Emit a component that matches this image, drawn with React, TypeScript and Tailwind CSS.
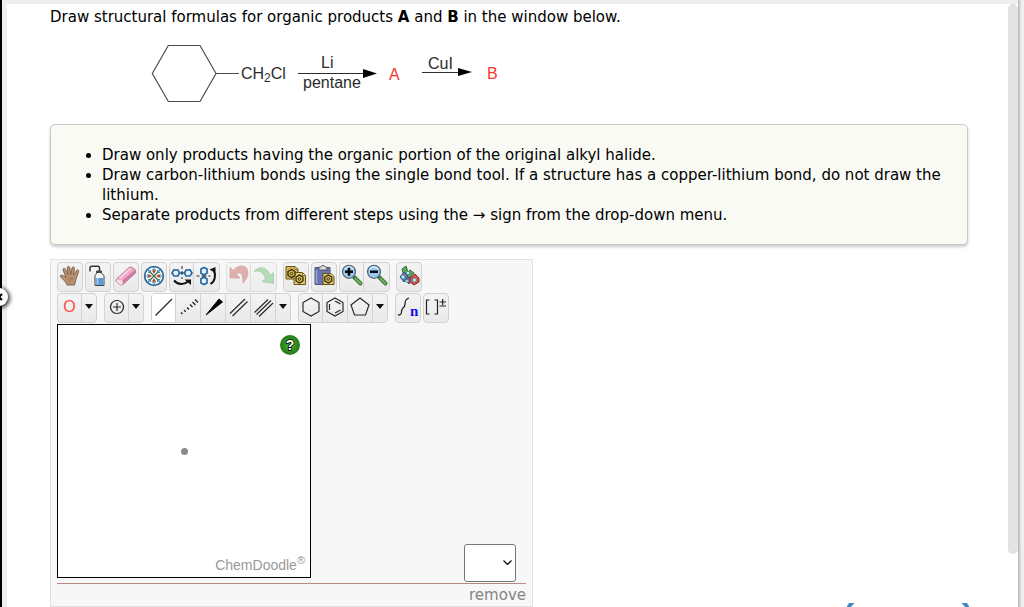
import React from "react";

type IconProps = { children: React.ReactNode };

function Icon({ children }: IconProps) {
  return (
    <svg viewBox="0 0 24 24" className="h-6 w-6 shrink-0" fill="none" aria-hidden="true">
      {children}
    </svg>
  );
}

const HandIcon = () => (
  <Icon>
    <path
      d="M9 21 C8.200 18.500 6 16 2.800 13.300 C1.600 12 3 10.500 4.500 11.300 L7.800 13.200 L5 6 C4.600 4.300 6.700 3.600 7.400 5.200 L10 10.800 L9.200 3.800 C9.200 2 11.500 2 11.800 3.700 L12.800 10.300 L14 4 C14.400 2.300 16.700 2.700 16.400 4.600 L15.700 11 L18.500 6.500 C19.400 5 21.300 6.100 20.600 7.800 L18.300 14.500 C17.600 17 17 19 16.500 21 Z"
      fill="#b8906f"
      stroke="#6d5543"
      strokeWidth="0.8"
    />
    <path d="M9 15c2.500-1.500 5-1 7 .5M11 18.500c.3-2 1.500-3 3.500-3.500" stroke="#8d6a50" strokeWidth="0.700" />
  </Icon>
);

const BottleIcon = () => (
  <Icon>
    <path d="M4 7.500V4c0-1.200.7-1.800 1.800-1.800H12c1 0 1.500.6 1.500 1.500V7" stroke="#333" strokeWidth="1.500" />
    <path d="M10.500 7h5v2.500l2.500 2V21.500H9V11.500l1.500-2z" fill="#f4f7fa" stroke="#444" />
    <path d="M9.700 14h7.700v6.900H9.700z" fill="#5b9cd6" />
    <path d="M11.500 14v6.500" stroke="#a5cff0" strokeWidth="1.500" />
    <path d="M10.500 8h5" stroke="#444" strokeWidth="1.800" />
  </Icon>
);

const EraserIcon = () => (
  <Icon>
    <path d="M2.500 15 15 3.500q1.500-1 3 0l3 2q1 1 .5 3.500L9 20.500q-1.500 1-3 0L2.500 18q-1.200-1 0-3z" fill="#f0a9c7" stroke="#a8708a" strokeWidth="0.800" />
    <path d="M8.500 20.500V16.500L21.300 5.500v3.700z" fill="#cd7b9f" />
    <path d="M2.600 15.500l5.900 1.200v3.600q-1.500.7-2.500 0L2.800 18z" fill="#f8dce7" />
    <path d="M5.500 14.300 16.500 4.500" stroke="#fad3e2" strokeWidth="1.800" />
  </Icon>
);

const SnowIcon = () => (
  <Icon>
    <circle cx="12" cy="12" r="9.300" fill="#fff" stroke="#2f6f9f" strokeWidth="1.800" />
    {[0, 45, 90, 135, 180, 225, 270, 315].map((a) => (
      <g key={a} transform={`rotate(${a} 12 12)`}>
        <path d="M12 8V3.500" stroke="#3780ad" strokeWidth="1.200" />
        <path d="M10.300 5.300 12 7.300l1.700-2" stroke="#3f8a76" strokeWidth="1" />
      </g>
    ))}
    {[0, 90, 180, 270].map((a) => (
      <path key={a} transform={`rotate(${a} 12 12)`} d="M10 6.500h4L12 10z" fill="#c23636" />
    ))}
    <path d="m9 9 6 6M15 9l-6 6" stroke="#37744c" strokeWidth="1.300" />
  </Icon>
);

const FlipHorizontalIcon = () => (
  <Icon>
    <path d="M2 9 4 5.800 8 6l1.500 3L8 12H4zM22 9l-2-3.200L16 6l-1.500 3 1.500 3h4z" fill="#e8f2fb" stroke="#2669a3" strokeWidth="1.700" />
    <path d="M9.500 9h5" stroke="#2669a3" strokeWidth="1.500" />
    <path d="M12 2v3M12 7v4M12 13v2" stroke="#222" />
    <path d="M4 16.500c4 4.500 10 4.500 14 1" stroke="#111" strokeWidth="2" />
    <path d="M14.500 15.500H21V21z" fill="#111" />
  </Icon>
);

const FlipVerticalIcon = () => (
  <Icon>
    <path d="M9 11 5.800 9 6 5l3-1.500L12 5v4zM9 13l-3.200 2 .2 4 3 1.500 3-1.500v-4z" fill="#e8f2fb" stroke="#2669a3" strokeWidth="1.700" />
    <path d="M1.500 12h3M6.500 12h5M13.500 12h2" stroke="#222" />
    <path d="M15.500 20c5-3 5.500-9.500 3-14" stroke="#111" strokeWidth="2" />
    <path d="M14.500 5.500 20.500 3v6z" fill="#111" />
  </Icon>
);

const UndoIcon = () => (
  <Icon>
    <path d="M3 3.500V14h10l-3.500-3.500C12 7.500 16.500 7.500 16 19 23 12 22.500 2 14.500 2 10.500 2 8 4.300 6.500 6.500z" fill="#d08b85" stroke="#bb6f6a" strokeWidth="0.700" />
  </Icon>
);

const RedoIcon = () => (
  <Icon>
    <path d="M21.500 19.500V8.500L18 11.500C16 3.500 8 1 2 7.500 7.500 5.500 12 8.500 13.500 15L10 17.500z" fill="#93cf96" stroke="#6fb275" strokeWidth="0.700" />
  </Icon>
);

const Ring = ({ x, y }: { x: number; y: number }) => (
  <g transform={`translate(${x} ${y})`}>
    <path d="M0-4 3.500-2V2L0 4-3.500 2v-4z" fill="#d8b952" stroke="#2b240e" strokeWidth="1.200" />
    <circle r="1.300" stroke="#2b240e" strokeWidth="0.800" />
  </g>
);

const CopyIcon = () => (
  <Icon>
    <path d="M2 2.500h9l3 3V15H2z" fill="#d5b64d" stroke="#675520" />
    <path d="M10 8.500h8.500l3 3V20.500H10z" fill="#e1c765" stroke="#675520" />
    <path d="m11 2.500 3 3h-3zM18.500 8.500l3 3h-3z" fill="#f8edb9" stroke="#675520" strokeWidth="0.700" />
    <Ring x={7.5} y={9.5} />
    <Ring x={15.5} y={15} />
  </Icon>
);

const PasteIcon = () => (
  <Icon>
    <path d="M3 3.500h15v17H3z" fill="#6774b1" stroke="#4a5486" />
    <path d="M7 5V3h2l1-1.500h2L13 3h2v3H7z" fill="#ddd" stroke="#444" strokeWidth="0.800" />
    <path d="M4.500 6v13.500" stroke="#9ba7d5" strokeWidth="1.500" />
    <path d="M11 9.500h8l3 3V20.500H11z" fill="#dfc66a" stroke="#675520" />
    <Ring x={16.3} y={15} />
  </Icon>
);

const ZoomGlass = ({ plus }: { plus: boolean }) => (
  <Icon>
    <path d="m14 13 6.500 6.500" stroke="#3f6b3c" strokeWidth="4" strokeLinecap="round" />
    <path d="m15.500 14.500 5 5" stroke="#6cb45a" strokeWidth="2.200" strokeLinecap="round" />
    <circle cx="9" cy="7.800" r="6.500" fill="#9cc9ec" stroke="#536778" strokeWidth="1.300" />
    <path d="M4.500 5.300q4.500-5 9 0" stroke="#d7edfc" strokeWidth="1.500" />
    <path d={plus ? "M5 7.800h8M9 3.800v8" : "M5 7.800h8"} stroke="#080808" strokeWidth="2.500" />
  </Icon>
);

const ElementsIcon = () => (
  <Icon>
    <path d="m5 5 4-3 2 6-4 4zM8 12l5-6 4 3-5 6z" fill="#59a75b" stroke="#356b3b" />
    <path d="m3 13 4-5 4 4-4 6zM9 17l3-4 3 3-3 4z" fill="#6574b9" stroke="#3c497c" />
    <path d="m13 14 5-4 4 4v4l-5 3-4-3z" fill="#d55353" stroke="#8c2929" />
    <g fill="#b9eced" stroke="#437b83" strokeWidth="0.700">
      <circle cx="6" cy="13" r="2" />
      <circle cx="11" cy="9" r="1.800" />
      <circle cx="17.500" cy="16" r="2" />
      <circle cx="10" cy="17" r="1.500" />
    </g>
  </Icon>
);

const Line = ({ d }: { d: string }) => (
  <Icon>
    <path d={d} stroke="#2b2b2b" strokeWidth="1.200" />
  </Icon>
);

const WedgeIcon = () => (
  <Icon>
    <path d="M5 20 18 4l3.500 3z" fill="#050505" stroke="#050505" />
  </Icon>
);

const ChainIcon = () => (
  <Icon>
    <path d="M2 20c6 0 1.500-4 5-7 4.500-2.500-1-8 6-10" stroke="#222" strokeWidth="1.300" />
    <text x="14" y="20.500" fill="#1111ee" fontSize="15" fontWeight="bold" fontFamily="Liberation Serif, serif">n</text>
  </Icon>
);

const ChargeIcon = () => (
  <Icon>
    <path d="M5.500 5h-3v14h3M10.500 5h3v14h-3M15.500 7h6.500M18.700 4v6M15.500 11H22" stroke="#222" strokeWidth="1.200" />
  </Icon>
);

type Cell = {
  label: string;
  icon?: React.ReactNode;
  active?: boolean;
};

type GroupProps = { cells: Cell[]; menu?: boolean; faded?: boolean };

function Group({ cells, menu = false, faded = false }: GroupProps) {
  return (
    <div
      className={`flex h-[30px] divide-x divide-[#d2d2d2] overflow-hidden rounded border border-[#d2d2d2] bg-linear-to-b from-[#f4f4f4] to-[#e9e9e9] ${faded ? "opacity-65" : ""}`}
    >
      {cells.map((cell, i) => (
        <button
          key={cell.label}
          type="button"
          aria-label={cell.label}
          className={`flex items-center justify-center pb-0.5 ${i === 0 ? "w-6" : "w-[25px]"} ${cell.active ? "bg-white" : ""}`}
        >
          {cell.icon}
        </button>
      ))}
      {menu && (
        <button
          type="button"
          aria-label={`More: ${cells[0].label}`}
          className="flex w-[14px] items-center justify-center pb-1"
        >
          <svg viewBox="0 0 8 5" className="h-[5px] w-2" aria-hidden="true">
            <path d="M0 0h8L4 5z" fill="#111" />
          </svg>
        </button>
      )}
    </div>
  );
}

function Toolbar() {
  return (
    <div className="flex flex-col gap-px">
      <div className="flex gap-1.5">
        <div className="flex gap-0.5">
          <Group cells={[{ label: "Move", icon: <HandIcon /> }]} />
          <Group cells={[{ label: "Clear", icon: <BottleIcon /> }]} />
          <Group cells={[{ label: "Erase", icon: <EraserIcon /> }]} />
          <Group cells={[{ label: "Center", icon: <SnowIcon /> }]} />
          <Group
            cells={[
              { label: "Flip horizontally", icon: <FlipHorizontalIcon /> },
              { label: "Flip vertically", icon: <FlipVerticalIcon /> },
            ]}
          />
        </div>
        <Group
          faded
          cells={[
            { label: "Undo", icon: <UndoIcon /> },
            { label: "Redo", icon: <RedoIcon /> },
          ]}
        />
        <div className="flex gap-0.5">
          <Group cells={[{ label: "Copy", icon: <CopyIcon /> }]} />
          <Group cells={[{ label: "Paste", icon: <PasteIcon /> }]} />
          <Group
            cells={[
              { label: "Zoom in", icon: <ZoomGlass plus /> },
              { label: "Zoom out", icon: <ZoomGlass plus={false} /> },
            ]}
          />
        </div>
        <Group cells={[{ label: "Element colors", icon: <ElementsIcon /> }]} />
      </div>
      <div className="flex gap-[7px]">
        <Group
          menu
          cells={[{ label: "Oxygen", icon: <span className="font-['Liberation_Sans',sans-serif] text-base text-[#ff4a42]">O</span> }]}
        />
        <Group menu cells={[{ label: "Charge", icon: <Line d="M12 5.500a6.500 6.500 0 1 0 .01 0M12 8v8M8 12h8" /> }]} />
        <Group
          menu
          cells={[
            { label: "Single bond", active: true, icon: <Line d="M3.500 20.500 20 4" /> },
            {
              label: "Recessed bond",
              icon: (
                <Icon>
                  <path d="m5 17.500 1.500 1.500M8 15 9.700 16.700M11 12.500l2 2M14 9.500l2.500 2.500M16.500 7l3 3M19 4.500l3 3" stroke="#222" strokeWidth="1.300" />
                </Icon>
              ),
            },
            { label: "Protruding bond", icon: <WedgeIcon /> },
            { label: "Double bond", icon: <Line d="M4 18.500 19 4M6.500 21 21.500 6.500" /> },
            { label: "Triple bond", icon: <Line d="M3.500 17.500 17 4.500M5.500 19.500 20 5.500M8 21.500 22 8" /> },
          ]}
        />
        <Group
          menu
          cells={[
            { label: "Cyclohexane", icon: <Line d="m12 3 8 4.500v9L12 21l-8-4.500v-9z" /> },
            { label: "Benzene", icon: <Line d="m12 3 8 4.500v9L12 21l-8-4.500v-9zM6.500 9v6M12 6l5.500 3M17.500 15 12 18" /> },
            { label: "Cyclopentane", icon: <Line d="m12 3 9 7-3.500 10h-11L3 10z" /> },
          ]}
        />
        <div className="flex gap-0.5">
          <Group cells={[{ label: "Chain", icon: <ChainIcon /> }]} />
          <Group cells={[{ label: "Brackets", icon: <ChargeIcon /> }]} />
        </div>
      </div>
    </div>
  );
}

function Reaction() {
  return (
    <svg
      viewBox="150 36 350 72"
      className="mt-[9px] ml-[100px] h-[72px] w-[350px] font-['Liberation_Sans',sans-serif] text-base"
      role="img"
      aria-label="Chloromethylcyclohexane reacts with lithium in pentane to give A, then with copper iodide to give B"
    >
      <path d="M152.300 73.500 168.300 45.500H200L216 73.500 200 101.500H168.300ZM216 73.500H239" fill="none" stroke="#4c4c4c" strokeWidth="1.200" />
      <g fill="#2b2b2b">
        <text x="241" y="79">
          CH<tspan fontSize="12" dy="3">2</tspan><tspan dy="-3">Cl</tspan>
        </text>
        <text x="321" y="68">Li</text>
        <text x="303" y="88">pentane</text>
        <text x="428" y="69">CuI</text>
      </g>
      <path d="M298 73.500H366M422 72.500H460" stroke="#2b2b2b" strokeWidth="1.200" />
      <path d="M363 69 377 73.500 363 78ZM458 68 472 72 458 76Z" fill="#000" />
      <g fill="#f9362e">
        <text x="389" y="80">A</text>
        <text x="487" y="79">B</text>
      </g>
    </svg>
  );
}

function Sketcher() {
  return (
    <section className="mt-[14px] w-[483px] border border-[#e1e1e1] bg-[#f7f7f7] px-1.5 pt-0.5">
      <Toolbar />
      <div className="mt-px flex items-end justify-between border-b border-[#b88b88] pr-2.5">
        <div className="relative mb-[5px] flex size-[254px] items-center justify-center border border-black bg-white">
          <span className="size-[7px] rounded-full bg-[#8b8b8b]" />
          <button type="button" aria-label="Help" className="absolute top-2.5 right-2.5 size-5">
            <svg viewBox="0 0 20 20" className="size-5">
              <defs>
                <radialGradient id="help">
                  <stop offset="0" stopColor="#42b52e" />
                  <stop offset="1" stopColor="#267819" />
                </radialGradient>
              </defs>
              <circle cx="10" cy="10" r="10" fill="url(#help)" />
              <text x="10" y="15" textAnchor="middle" fontSize="14" fontWeight="bold" fontFamily="Liberation Sans, sans-serif" fill="#fff" stroke="#000" strokeWidth="1.500" paintOrder="stroke">?</text>
            </svg>
          </button>
          <span className="absolute right-[5px] bottom-0.5 font-['Liberation_Sans',sans-serif] text-sm leading-5 text-[#999]">
            ChemDoodle<sup className="-top-1.5 text-[11px]">®</sup>
          </span>
        </div>
        <div className="relative mb-px">
          <select aria-label="Separator sign" className="block h-[38px] w-[52px] appearance-none rounded-[3px] border border-[#767676] bg-white">
            <option value=""></option>
            <option value="arrow">→</option>
            <option value="plus">+</option>
          </select>
          <svg viewBox="0 0 9 5" className="pointer-events-none absolute top-4 right-1 h-[5px] w-[9px]" aria-hidden="true">
            <path d="m.5.5 4 4 4-4" fill="none" stroke="#111" strokeWidth="1.300" />
          </svg>
        </div>
      </div>
      <div className="flex h-[22px] items-center justify-end">
        <button type="button" className="text-[15px] leading-5 text-[#858585]">remove</button>
      </div>
    </section>
  );
}

export default function App() {
  return (
    <div className="relative flex h-screen overflow-hidden bg-[#efefef] pt-1 font-['DejaVu_Sans',sans-serif] text-[15px] leading-5 text-black">
      <div className="-mt-1 mr-[5px] w-0.5 bg-black" />
      <main className="min-w-0 flex-1 bg-white pt-[3px] pr-[40px] pl-[43px]">
        <p>
          Draw structural formulas for organic products <b>A</b> and <b>B</b> in the window below.
        </p>
        <Reaction />
        <ul className="mt-4 list-disc rounded-[5px] border border-[#c9c9c9] bg-[#f9faf4] pt-5 pr-[5px] pb-[19px] pl-[51px] shadow-[0_2px_3px_rgba(0,0,0,0.2)]">
          <li>Draw only products having the organic portion of the original alkyl halide.</li>
          <li>
            Draw carbon-lithium bonds using the single bond tool. If a structure has a copper-lithium bond, do not draw the lithium.
          </li>
          <li>Separate products from different steps using the → sign from the drop-down menu.</li>
        </ul>
        <Sketcher />
      </main>
      <div className="w-2.5 bg-white">
        <div className="h-[550px] rounded-full bg-[#e3e3e3]" />
      </div>
      <div className="-mt-1 w-1.5 bg-linear-to-r from-[#b5b5b5] to-[#efefef] to-60%" />
      <button
        type="button"
        aria-label="Close"
        className="absolute top-[288px] -left-[10px] flex size-[18px] items-center justify-center rounded-full bg-white shadow-[1px_1px_4px_1px_rgba(0,0,0,0.8)]"
      >
        <svg viewBox="0 0 8 8" className="size-2" aria-hidden="true">
          <path d="m1 1 6 6M7 1 1 7" stroke="#000" strokeWidth="2" />
        </svg>
      </button>
      <nav className="absolute right-[54px] bottom-0 flex h-1 w-[124px] items-start justify-between overflow-hidden">
        <button type="button" aria-label="Previous">
          <svg viewBox="0 0 10 16" className="block h-4 w-2.5" aria-hidden="true">
            <path d="M3 0h5.500L5 4 1 8 0 5z" fill="#4389c0" />
          </svg>
        </button>
        <button type="button" aria-label="Next">
          <svg viewBox="0 0 10 16" className="block h-4 w-2.5" aria-hidden="true">
            <path d="M7 0H1.500L5 4l4 4 1-3z" fill="#4389c0" />
          </svg>
        </button>
      </nav>
    </div>
  );
}
